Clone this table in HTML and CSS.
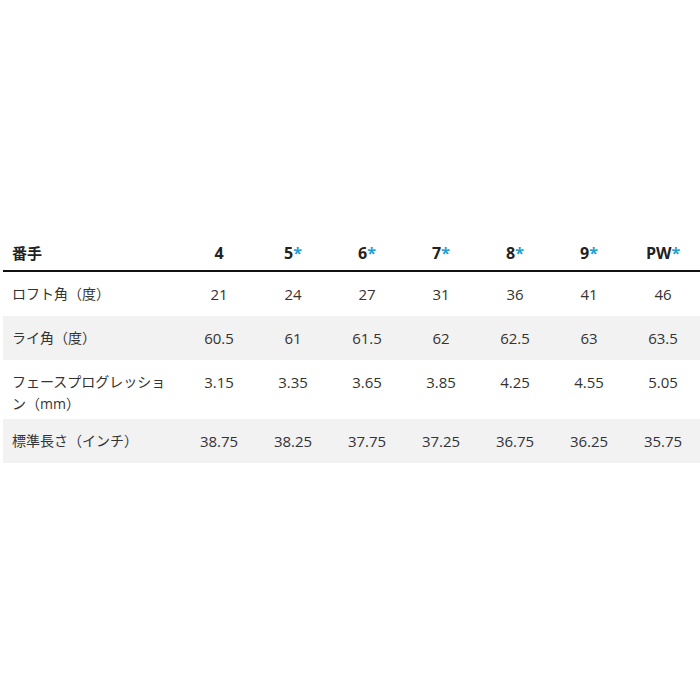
FILE: index.html
```html
<!DOCTYPE html>
<html lang="ja">
<head>
<meta charset="utf-8">
<link rel="stylesheet" href="styles.css">
</head>
<body>
<table class="spec">
  <colgroup>
    <col class="col-label">
    <col class="col-val"><col class="col-val"><col class="col-val"><col class="col-val"><col class="col-val"><col class="col-val"><col class="col-val">
  </colgroup>
  <thead>
    <tr>
      <th class="label">番手</th>
      <th>4</th>
      <th>5<span class="ast">*</span></th>
      <th>6<span class="ast">*</span></th>
      <th>7<span class="ast">*</span></th>
      <th>8<span class="ast">*</span></th>
      <th>9<span class="ast">*</span></th>
      <th>PW<span class="ast">*</span></th>
    </tr>
  </thead>
  <tbody>
    <tr>
      <td class="label">ロフト角（度）</td>
      <td>21</td><td>24</td><td>27</td><td>31</td><td>36</td><td>41</td><td>46</td>
    </tr>
    <tr class="shade">
      <td class="label">ライ角（度）</td>
      <td>60.5</td><td>61</td><td>61.5</td><td>62</td><td>62.5</td><td>63</td><td>63.5</td>
    </tr>
    <tr>
      <td class="label wrap">フェースプログレッション（mm）</td>
      <td>3.15</td><td>3.35</td><td>3.65</td><td>3.85</td><td>4.25</td><td>4.55</td><td>5.05</td>
    </tr>
    <tr class="shade">
      <td class="label">標準長さ（インチ）</td>
      <td>38.75</td><td>38.25</td><td>37.75</td><td>37.25</td><td>36.75</td><td>36.25</td><td>35.75</td>
    </tr>
  </tbody>
</table>
</body>
</html>
```
FILE: styles.css
```css
html, body {
  margin: 0;
  padding: 0;
  background: #ffffff;
}

.spec {
  margin: 232px 0 0 3px;
  width: 697px;
  border-collapse: collapse;
  table-layout: fixed;
  font-family: "Open Sans", "Noto Sans CJK JP", sans-serif;
  color: #333333;
}

.col-label {
  width: 179px;
}

.col-val {
  width: 74px;
}

.spec th,
.spec td {
  padding: 11px 9px;
  line-height: 22px;
  text-align: center;
  vertical-align: top;
}

.spec th {
  padding: 10px 9px 6px;
  font-size: 16px;
  font-weight: 700;
  color: #222222;
}

.spec th.label {
  font-size: 15px;
}

.spec thead tr {
  border-bottom: 2px solid #111111;
}

.spec td {
  font-size: 15px;
}

.spec .label {
  text-align: left;
}

.spec td.label {
  font-size: 14px;
}

.spec td.wrap {
  padding-bottom: 4px;
}

.shade {
  background: #f2f2f2;
}

.ast {
  color: #1f9fd2;
}
```
